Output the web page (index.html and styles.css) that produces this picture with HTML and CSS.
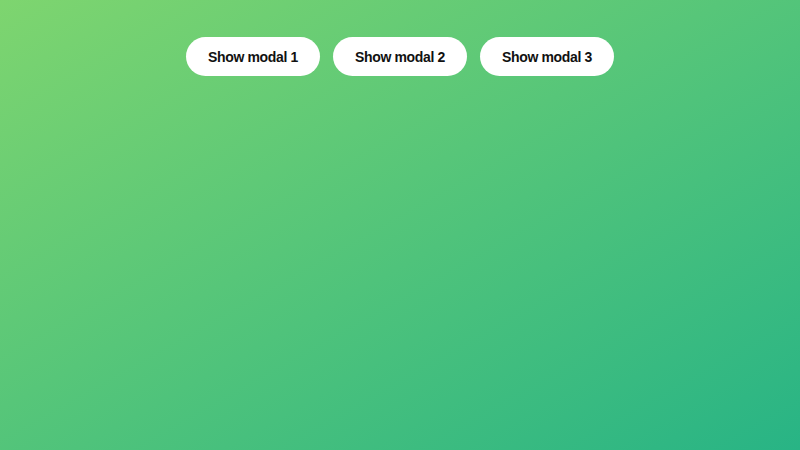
FILE: index.html
```html
<!DOCTYPE html>
<html lang="en">
<head>
<meta charset="utf-8">
<title>Modals</title>
<link rel="stylesheet" href="styles.css">
</head>
<body>
  <main class="page">
    <div class="actions">
      <button class="btn" type="button">Show modal 1</button>
      <button class="btn" type="button">Show modal 2</button>
      <button class="btn" type="button">Show modal 3</button>
    </div>
  </main>
</body>
</html>
```
FILE: styles.css
```css
* {
  box-sizing: border-box;
}

html,
body {
  margin: 0;
  height: 100%;
}

body {
  font-family: "Liberation Sans", Arial, sans-serif;
  background: linear-gradient(to right bottom, #7ed56f, #28b485);
}

.page {
  padding-top: 37px;
}

.actions {
  display: flex;
  justify-content: center;
  gap: 13px;
}

.btn {
  font-family: inherit;
  font-size: 14px;
  font-weight: 700;
  letter-spacing: -0.35px;
  line-height: 16px;
  color: #111;
  background: #fff;
  border: none;
  border-radius: 100px;
  padding: 0;
  width: 134px;
  height: 39px;
  cursor: pointer;
}
```
